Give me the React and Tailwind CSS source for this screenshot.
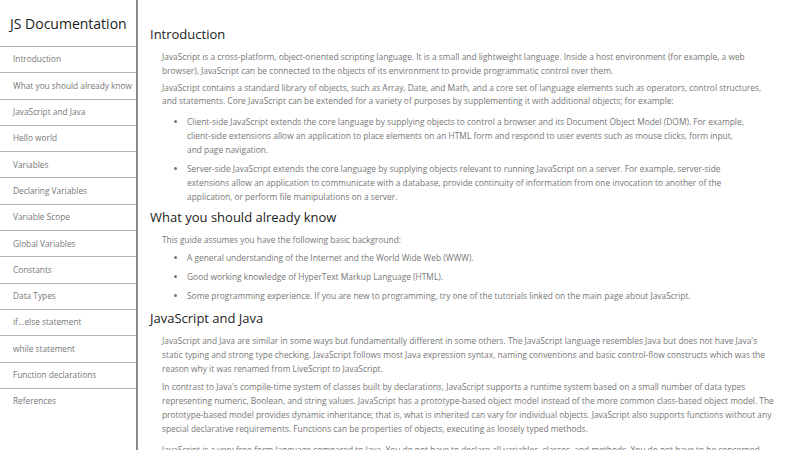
const nav = [
  "Introduction",
  "What you should already know",
  "JavaScript and Java",
  "Hello world",
  "Variables",
  "Declaring Variables",
  "Variable Scope",
  "Global Variables",
  "Constants",
  "Data Types",
  "if...else statement",
  "while statement",
  "Function declarations",
  "References",
];

function H({ children, className = "" }) {
  return (
    <h2 className={"text-[13px] leading-[20px] text-[#222] " + className}>{children}</h2>
  );
}

function P({ children, className = "" }) {
  return <p className={"ml-[12px] " + className}>{children}</p>;
}

function UL({ children, className = "" }) {
  return <ul className={"ml-[25px] mr-[16px] list-disc pl-[12px] " + className}>{children}</ul>;
}

export default function App() {
  return (
    <div
      className="flex h-[450px] w-[800px] overflow-hidden bg-white"
      style={{ fontFamily: '"Open Sans", sans-serif' }}
    >
      <nav className="h-full w-[138px] shrink-0 border-r-2 border-[#8a8a8a]">
        <header className="flex h-[46px] items-center whitespace-nowrap pl-[10px] text-[14px] text-[#222]">
          JS Documentation
        </header>
        <ul>
          {nav.map((n) => (
            <li
              key={n}
              className="flex h-[26.3px] items-center whitespace-nowrap border-t border-[#b5b5b5] pl-[13px] text-[8.3px] text-[#777]"
            >
              {n}
            </li>
          ))}
        </ul>
      </nav>
      <main className="min-w-0 flex-1 pl-[12px] pr-[24px] pt-[24px] text-[8.4px] leading-[13.75px] text-[#777]">
        <section>
          <H>Introduction</H>
          <P className="mt-[6px]">
            JavaScript is a cross-platform, object-oriented scripting language. It is a small and lightweight language. Inside a host environment (for example, a web browser), JavaScript can be connected to the objects of its environment to provide programmatic control over them.
          </P>
          <P className="mt-[3px]">
            JavaScript contains a standard library of objects, such as Array, Date, and Math, and a core set of language elements such as operators, control structures, and statements. Core JavaScript can be extended for a variety of purposes by supplementing it with additional objects; for example:
          </P>
          <UL className="mt-[7px]">
            <li>
              Client-side JavaScript extends the core language by supplying objects to control a browser and its Document Object Model (DOM). For example, client-side extensions allow an application to place elements on an HTML form and respond to user events such as mouse clicks, form input,
              <br />
              and page navigation.
            </li>
            <li className="mt-[6px]">
              Server-side JavaScript extends the core language by supplying objects relevant to running JavaScript on a server. For example, server-side extensions allow an application to communicate with a database, provide continuity of information from one invocation to another of the application, or perform file manipulations on a server.
            </li>
          </UL>
        </section>
        <section className="mt-[3px]">
          <H>What you should already know</H>
          <P className="mt-[6px]">This guide assumes you have the following basic background:</P>
          <UL className="mt-[5px]">
            <li>A general understanding of the Internet and the World Wide Web (WWW).</li>
            <li className="mt-[5.25px]">Good working knowledge of HyperText Markup Language (HTML).</li>
            <li className="mt-[5.25px]">
              Some programming experience. If you are new to programming, try one of the tutorials linked on the main page about JavaScript.
            </li>
          </UL>
        </section>
        <section className="mt-[5px]">
          <H>JavaScript and Java</H>
          <P className="mt-[6px]">
            JavaScript and Java are similar in some ways but fundamentally different in some others. The JavaScript language resembles Java but does not have Java's static typing and strong type checking. JavaScript follows most Java expression syntax, naming conventions and basic control-flow constructs which was the reason why it was renamed from LiveScript to JavaScript.
          </P>
          <P className="mt-[5px]">
            In contrast to Java's compile-time system of classes built by declarations, JavaScript supports a runtime system based on a small number of data types representing numeric, Boolean, and string values. JavaScript has a prototype-based object model instead of the more common class-based object model. The prototype-based model provides dynamic inheritance; that is, what is inherited can vary for individual objects. JavaScript also supports functions without any special declarative requirements. Functions can be properties of objects, executing as loosely typed methods.
          </P>
          <P className="mt-[8px]">
            JavaScript is a very free-form language compared to Java. You do not have to declare all variables, classes, and methods. You do not have to be concerned with whether methods are public, private, or protected, and you do not have to implement interfaces. Variables, parameters, and function return types are not explicitly typed.
          </P>
        </section>
      </main>
    </div>
  );
}
